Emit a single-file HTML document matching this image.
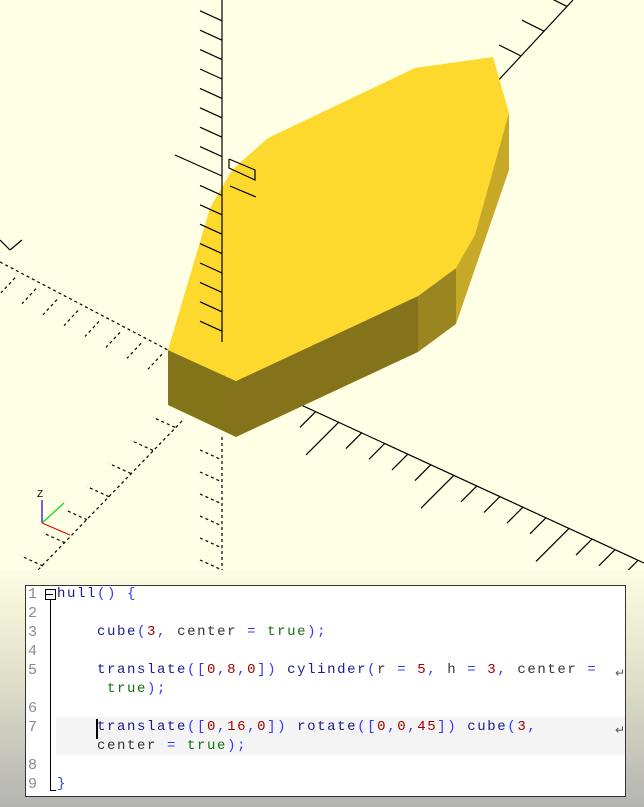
<!DOCTYPE html>
<html><head><meta charset="utf-8"><style>
html,body{margin:0;padding:0;width:644px;height:807px;overflow:hidden;background:#ffffe5}
#bg{position:absolute;left:0;top:570px;width:644px;height:237px;background:linear-gradient(#fdfde3,#e4e4cc 40%,#b4b4b2)}
#ed{position:absolute;left:25px;top:585px;width:599px;height:210px;background:#fff;border:1px solid #333}
.ln{position:absolute;left:0;width:22px;font:15px "Liberation Mono",monospace;color:#8a8a8a;padding-left:2px}
.c{position:absolute;left:71px;font:14px "Liberation Mono",monospace;letter-spacing:1.6px;white-space:pre;color:#333}
.k{color:#1a1a8c}.p{color:#3535ff}.n{color:#a00000}.t{color:#157015}
</style></head><body>
<svg id="v" width="644" height="570" style="position:absolute;left:0;top:0" xmlns="http://www.w3.org/2000/svg">
<g id="axes" stroke="#000" stroke-width="1.2" fill="none"></g>
<polygon points="168,350 236,381 236,437 168,405" fill="#847419"/>
<polygon points="236,381 418,296 418,352 236,437" fill="#84731a"/>
<polygon points="418,296 456,268 456,324 418,352" fill="#9a8620"/>
<polygon points="456,268 509,113 509,170 456,324" fill="#c6a927"/>
<polygon points="168,350 210,208 232,170 268,138 415,68 493,57 509,113 475,235 456,268 418,296 236,381" fill="#fcd92c"/>
<g stroke="#000" stroke-width="1.2" fill="none">
<line x1="222" y1="0" x2="222" y2="342"/>
<polyline points="229,159 255,170 255,180 229,168 229,159"/>
<line x1="230" y1="186" x2="256" y2="197"/>
<line x1="175" y1="155" x2="222" y2="176"/>
</g>
<g id="fg" stroke="#000" stroke-width="1.2" fill="none"></g>
<line x1="42" y1="523" x2="42" y2="500" stroke="#00f" stroke-width="1.2"/>
<line x1="42" y1="523" x2="64" y2="503" stroke="#0d0" stroke-width="1.2"/>
<line x1="42" y1="523" x2="70" y2="535" stroke="#e00" stroke-width="1.2"/>
<text x="37" y="497" font-family="Liberation Sans" font-size="10">Z</text>
</svg>
<div id="bg"></div>
<div id="ed">
<div style="position:absolute;left:30px;top:131px;width:569px;height:38px;background:#f4f4f4"></div>
<div style="position:absolute;left:19px;top:3px;width:9px;height:9px;border:1px solid #000;background:#fff"></div>
<div style="position:absolute;left:20px;top:8px;width:7px;height:1px;background:#000"></div>
<div style="position:absolute;left:24px;top:14px;width:1px;height:191px;background:#000"></div>
<div style="position:absolute;left:24px;top:204px;width:6px;height:1px;background:#000"></div>
<div style="position:absolute;left:70px;top:133px;width:2px;height:20px;background:#000"></div>
<div class="ln" style="top:0">1</div><div class="ln" style="top:19px">2</div><div class="ln" style="top:38px">3</div><div class="ln" style="top:57px">4</div><div class="ln" style="top:76px">5</div><div class="ln" style="top:114px">6</div><div class="ln" style="top:133px">7</div><div class="ln" style="top:171px">8</div><div class="ln" style="top:190px">9</div>
<div class="c" style="left:31px;top:0"><span class="k">hull</span><span class="p">() {</span></div>
<div class="c" style="top:38px"><span class="k">cube</span><span class="p">(</span><span class="n">3</span><span class="p">,</span> center <span class="p">=</span> <span class="t">true</span><span class="p">);</span></div>
<div class="c" style="top:76px"><span class="k">translate</span><span class="p">([</span><span class="n">0</span><span class="p">,</span><span class="n">8</span><span class="p">,</span><span class="n">0</span><span class="p">])</span> <span class="k">cylinder</span><span class="p">(</span>r <span class="p">=</span> <span class="n">5</span><span class="p">,</span> h <span class="p">=</span> <span class="n">3</span><span class="p">,</span> center <span class="p">=</span></div>
<div class="c" style="top:95px"> <span class="t">true</span><span class="p">);</span></div>
<div class="c" style="top:133px"><span class="k">translate</span><span class="p">([</span><span class="n">0</span><span class="p">,</span><span class="n">16</span><span class="p">,</span><span class="n">0</span><span class="p">])</span> <span class="k">rotate</span><span class="p">([</span><span class="n">0</span><span class="p">,</span><span class="n">0</span><span class="p">,</span><span class="n">45</span><span class="p">])</span> <span class="k">cube</span><span class="p">(</span><span class="n">3</span><span class="p">,</span></div>
<div class="c" style="top:152px">center <span class="p">=</span> <span class="t">true</span><span class="p">);</span></div>
<div class="c" style="left:31px;top:190px"><span class="p">}</span></div>
<div style="position:absolute;left:589px;top:80px;font:12px 'DejaVu Sans';color:#555">↵</div>
<div style="position:absolute;left:589px;top:137px;font:12px 'DejaVu Sans';color:#555">↵</div>
</div>
<script>
var NS="http://www.w3.org/2000/svg",a=document.getElementById('axes'),f=document.getElementById('fg');
function L(x1,y1,x2,y2,d,g){var l=document.createElementNS(NS,'line');l.setAttribute('x1',x1);l.setAttribute('y1',y1);l.setAttribute('x2',x2);l.setAttribute('y2',y2);if(d)l.setAttribute('stroke-dasharray','3,3');(g||a).appendChild(l);}
// z axis ticks (over shape)
for(var k=-8;k<=8;k++){var ye=176+k*19.4;if(k==0||ye<8||ye>335)continue;L(200,ye-10,222,ye,0,f);}
// x axis
L(236,375,644,563);
for(var i=0;i<17;i++){var x=270+i*23,yy=390+(x-270)*0.463,s=(i%5==3)?33:16;L(x,yy,x-s,yy+s);}
// -x dashed
L(0,262,168,350,1);
for(var i=0;i<8;i++){var x=15+i*21,yy=270+x*0.52;L(x,yy,x-14,yy+15,1);}
// z negative dashed
L(222,437,222,570,1);
for(var y=450;y<570;y+=22){L(200,y,222,y+10,1);}
// y axis positive
L(222,378,573,0);
for(var i=1;i<16;i++){var x=222+i*23,yy=378-(x-222)*1.077;L(x,yy,x-22,yy-11);}
// y negative dashed
L(182,421,38,570,1);
for(var i=0;i<7;i++){var x=175-i*22,yy=378+(222-x)*1.05;L(x,yy,x-22,yy-10,1);}
L(0,240,10,250);L(10,250,22,240);
</script>
</body></html>
